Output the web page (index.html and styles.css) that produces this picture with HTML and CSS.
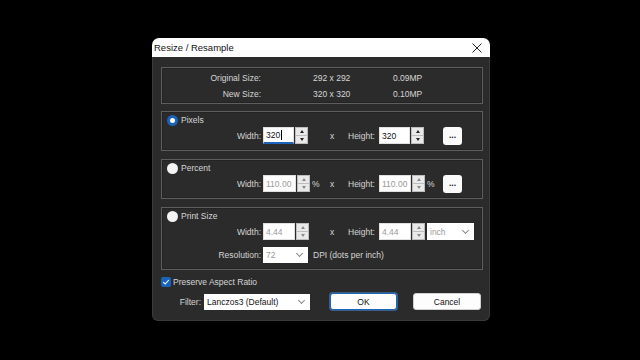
FILE: index.html
```html
<!DOCTYPE html>
<html lang="en">
<head>
  <meta charset="UTF-8" />
  <title>Resize / Resample</title>
  <link rel="stylesheet" href="styles.css">
</head>
<body>
<div class="dialog">
  <div class="titlebar">
    <span class="title">Resize / Resample</span>
    <svg class="close" width="10" height="10" viewBox="0 0 10 10"><path d="M0.5 0.5 L9.5 9.5 M9.5 0.5 L0.5 9.5" stroke="#222" stroke-width="1"/></svg>
  </div>
  <div class="content">
    <div class="group info">
      <div class="info-row"><span class="lbl">Original Size:</span><span class="dim">292 x 292</span><span>0.09MP</span></div>
      <div class="info-row"><span class="lbl">New Size:</span><span class="dim">320 x 320</span><span>0.10MP</span></div>
    </div>

    <div class="group">
      <div class="opt"><span class="radio on"></span>Pixels</div>
      <div class="row">
        <span class="lbl">Width:</span>
        <div class="lc">
          <div class="input focus" style="width:31px">320<span class="caret"></span></div>
          <div class="spin"><span class="up"></span><span class="down"></span></div>
        </div>
        <span class="x">x</span>
        <span class="hlbl">Height:</span>
        <div class="rc">
          <div class="input" style="width:31px">320</div>
          <div class="spin"><span class="up"></span><span class="down"></span></div>
        </div>
        <div class="dots">...</div>
      </div>
    </div>

    <div class="group">
      <div class="opt"><span class="radio"></span>Percent</div>
      <div class="row">
        <span class="lbl">Width:</span>
        <div class="lc">
          <div class="input off" style="width:33px">110.00</div>
          <div class="spin off"><span class="up"></span><span class="down"></span></div>
          <span class="unit">%</span>
        </div>
        <span class="x">x</span>
        <span class="hlbl">Height:</span>
        <div class="rc">
          <div class="input off" style="width:32px">110.00</div>
          <div class="spin off"><span class="up"></span><span class="down"></span></div>
          <span class="unit">%</span>
        </div>
        <div class="dots">...</div>
      </div>
    </div>

    <div class="group print">
      <div class="opt"><span class="radio"></span>Print Size</div>
      <div class="row">
        <span class="lbl">Width:</span>
        <div class="lc">
          <div class="input off" style="width:32px">4.44</div>
          <div class="spin off"><span class="up"></span><span class="down"></span></div>
        </div>
        <span class="x">x</span>
        <span class="hlbl">Height:</span>
        <div class="rc wide">
          <div class="input off" style="width:32px">4.44</div>
          <div class="spin off"><span class="up"></span><span class="down"></span></div>
          <div class="select off unit-sel">inch<span class="chev"></span></div>
        </div>
      </div>
      <div class="row row2">
        <span class="lbl">Resolution:</span>
        <div class="select off res-sel">72<span class="chev"></span></div>
        <span class="dpi">DPI (dots per inch)</span>
      </div>
    </div>

    <div class="check-row">
      <span class="check">
        <svg width="8" height="8" viewBox="0 0 8 8"><path d="M1.2 4.2 L3.2 6 L6.8 2" fill="none" stroke="#fff" stroke-width="1.1"/></svg>
      </span>
      Preserve Aspect Ratio
    </div>

    <div class="bottom-row">
      <span class="flbl">Filter:</span>
      <div class="select filter-sel">Lanczos3 (Default)<span class="chev"></span></div>
      <div class="btn ok">OK</div>
      <div class="btn cancel">Cancel</div>
    </div>
  </div>
</div>
</body>
</html>
```

FILE: styles.css
```css
body {
  margin: 0;
  padding: 38px 0 0 152px;
  height: 360px;
  box-sizing: border-box;
  overflow: hidden;
  background-color: #000;
  font-family: 'Liberation Sans', Arial, sans-serif;
  font-size: 8.5px;
  color: #d6d6d6;
}

.dialog {
  width: 338px;
}

.titlebar {
  height: 19px;
  background-color: #fff;
  border-radius: 7px 7px 0 0;
  display: flex;
  align-items: center;
  justify-content: space-between;
  padding: 0 8px 0 2px;
  color: #111;
}

.title {
  font-size: 9.5px;
}

.close {
  display: block;
  margin-top: 1px;
}

.content {
  background-color: #2b2b2b;
  border: 1px solid #3b3b3b;
  border-top: none;
  border-radius: 0 0 6px 6px;
  padding: 10px 6px 10px 8px;
}

.group {
  border: 1px solid #5e5e5e;
  box-shadow: inset 0 0 0 1px #232323;
  padding: 1px 0 6px;
  margin-bottom: 8px;
}

.group.info {
  padding: 2px 0 1px;
  margin-bottom: 7px;
}

.group.print {
  margin-bottom: 0;
}

.info-row {
  display: flex;
  align-items: center;
  height: 16px;
}

.lbl {
  width: 99px;
  text-align: right;
  margin-right: 2px;
  flex-shrink: 0;
}

.info-row .lbl {
  margin-right: 52px;
}

.dim {
  width: 80px;
}

.opt {
  display: flex;
  align-items: center;
  height: 14px;
  padding-left: 5px;
}

.radio {
  width: 11px;
  height: 11px;
  border-radius: 50%;
  background-color: #f4f4f4;
  margin-right: 3px;
  box-sizing: border-box;
}

.radio.on {
  background-color: #fff;
  border: 3px solid #1a63b8;
}

.row {
  display: flex;
  align-items: center;
  height: 17px;
}

.row2 {
  height: 16px;
  margin-top: 7px;
}

.lc {
  width: 67px;
  display: flex;
  align-items: center;
  height: 100%;
  flex-shrink: 0;
}

.rc {
  width: 64px;
  display: flex;
  align-items: center;
  height: 100%;
  flex-shrink: 0;
}

.rc.wide {
  width: auto;
}

.x {
  width: 18px;
  flex-shrink: 0;
}

.hlbl {
  width: 31px;
  flex-shrink: 0;
}

.input {
  height: 17px;
  box-sizing: border-box;
  background-color: #fff;
  border: 1px solid #e0e0e0;
  color: #111;
  padding-left: 2px;
  display: flex;
  align-items: center;
  flex-shrink: 0;
}

.input.focus {
  border-bottom: 2px solid #1a63b8;
}

.input.off {
  color: #9a9a9a;
}

.caret {
  width: 1px;
  height: 10px;
  background-color: #000;
  margin-left: 1px;
}

.spin {
  width: 13px;
  height: 17px;
  margin-left: 1px;
  display: flex;
  flex-direction: column;
  background-color: #e9e9e9;
  border: 1px solid #bdbdbd;
  box-sizing: border-box;
  flex-shrink: 0;
}

.spin span {
  flex: 1;
  display: flex;
  align-items: center;
  justify-content: center;
}

.spin .up {
  border-bottom: 1px solid #bdbdbd;
}

.spin .up::after,
.spin .down::after {
  content: "";
  border-left: 2.5px solid transparent;
  border-right: 2.5px solid transparent;
}

.spin .up::after {
  border-bottom: 3px solid #222;
}

.spin .down::after {
  border-top: 3px solid #222;
}

.spin.off .up::after {
  border-bottom-color: #8a8a8a;
}

.spin.off .down::after {
  border-top-color: #8a8a8a;
}

.unit {
  margin-left: 2px;
}

.dots {
  width: 19px;
  height: 18px;
  background-color: #fbfbfb;
  border-radius: 3px;
  color: #111;
  display: flex;
  align-items: center;
  justify-content: center;
  font-weight: bold;
  line-height: 1;
}

.select {
  height: 16px;
  box-sizing: border-box;
  background-color: #fff;
  color: #111;
  padding-left: 3px;
  display: flex;
  align-items: center;
  justify-content: space-between;
  flex-shrink: 0;
}

.select.off {
  color: #9a9a9a;
}

.chev {
  width: 4px;
  height: 4px;
  border-right: 1px solid #888;
  border-bottom: 1px solid #888;
  transform: rotate(45deg);
  margin: 0 6px 3px 0;
}

.unit-sel {
  width: 47px;
  height: 17px;
  margin-left: 2px;
}

.res-sel {
  width: 45px;
}

.dpi {
  margin-left: 5px;
}

.check-row {
  display: flex;
  align-items: center;
  height: 14px;
  margin-top: 5px;
}

.check {
  width: 10px;
  height: 10px;
  border-radius: 2px;
  background-color: #1a63b8;
  margin-right: 2px;
  display: flex;
  align-items: center;
  justify-content: center;
}

.bottom-row {
  display: flex;
  align-items: center;
  height: 17px;
  margin-top: 4px;
}

.flbl {
  width: 40px;
  text-align: right;
  margin-right: 3px;
}

.filter-sel {
  width: 106px;
}

.btn {
  height: 17px;
  box-sizing: border-box;
  background-color: #fdfdfd;
  color: #111;
  border-radius: 3px;
  display: flex;
  align-items: center;
  justify-content: center;
}

.ok {
  width: 67px;
  margin-left: 20px;
  border: 1px solid #1a63b8;
  box-shadow: 0 0 0 1px #3a5f8a;
}

.cancel {
  width: 68px;
  margin-left: 16px;
  border: 1px solid #d0d0d0;
}
```
